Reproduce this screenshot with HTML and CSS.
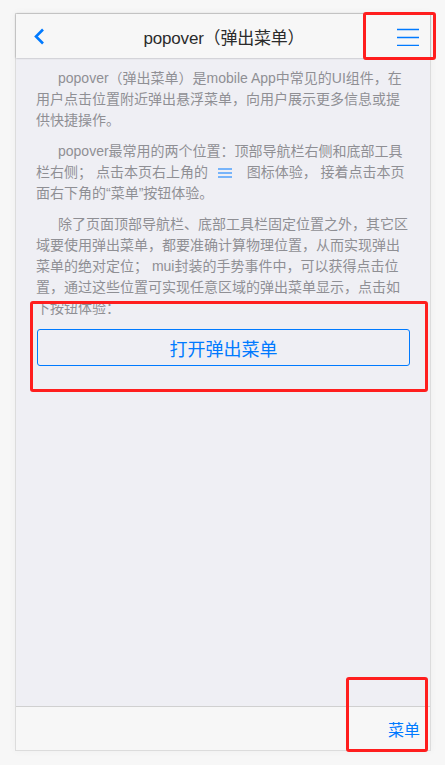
FILE: index.html
```html
<!DOCTYPE html>
<html lang="zh-CN">
<head>
<meta charset="utf-8">
<title>popover（弹出菜单）</title>
<link rel="stylesheet" href="styles.css">
</head>
<body>
<div class="stage">
  <div class="phone">
    <header class="bar bar-nav">
      <a class="back" aria-label="返回">
        <svg width="12" height="17" viewBox="0 0 12 17"><path d="M10 1.5 L3 8.5 L10 15.5" fill="none" stroke="#007aff" stroke-width="2.6"/></svg>
      </a>
      <h1 class="title">popover（弹出菜单）</h1>
      <a class="menu-icon" aria-label="菜单">
        <svg width="22" height="18" viewBox="0 0 22 18"><path d="M0 1.5H22M0 9.5H22M0 17.5H22" stroke="#007aff" stroke-width="1.4"/></svg>
      </a>
    </header>
    <main class="content">
      <p class="para">popover（弹出菜单）是mobile App中常见的UI组件，在用户点击位置附近弹出悬浮菜单，向用户展示更多信息或提供快捷操作。</p>
      <p class="para">popover最常用的两个位置：顶部导航栏右侧和底部工具栏右侧； 点击本页右上角的 <svg class="inline-icon" width="14" height="10" viewBox="0 0 14 10"><path d="M0 1H14M0 5H14M0 9H14" stroke="#007aff" stroke-width="1.2"/></svg> 图标体验， 接着点击本页面右下角的“菜单”按钮体验。</p>
      <p class="para">除了页面顶部导航栏、底部工具栏固定位置之外，其它区域要使用弹出菜单，都要准确计算物理位置，从而实现弹出菜单的绝对定位； mui封装的手势事件中，可以获得点击位置，通过这些位置可实现任意区域的弹出菜单显示，点击如下按钮体验：</p>
      <button class="btn-block">打开弹出菜单</button>
    </main>
    <footer class="bar bar-tab">
      <a class="tab-menu">菜单</a>
    </footer>
  </div>
  <div class="mark mark-top"></div>
  <div class="mark mark-mid"></div>
  <div class="mark mark-bottom"></div>
</div>
</body>
</html>
```
FILE: styles.css
```css
* { box-sizing: border-box; }
html, body {
  margin: 0;
  padding: 0;
  background: #f7f7f7;
}
body {
  font-family: "Liberation Sans", "Noto Sans CJK SC", sans-serif;
  width: 445px;
  height: 765px;
  overflow: hidden;
}
.stage {
  position: relative;
  padding: 13px 0 0 15px;
}
.phone {
  width: 416px;
  height: 738px;
  border: 1px solid #dcdcdc;
  background: #efeff4;
  display: flex;
  flex-direction: column;
  box-shadow: 0 0 8px rgba(0,0,0,0.04);
}
.bar {
  background: #f7f7f7;
  flex: none;
  height: 44px;
  display: flex;
  align-items: center;
}
.bar-nav {
  position: relative;
  box-shadow: 0 0 2px rgba(0,0,0,0.35);
  z-index: 1;
  padding: 0 11px 0 17px;
}
.back {
  display: flex;
  width: 30px;
}
.title {
  flex: 1;
  margin: 0;
  text-align: center;
  font-size: 17px;
  font-weight: normal;
  color: #2b2b2b;
  letter-spacing: -0.2px;
  padding-right: 4px;
}
.menu-icon {
  display: flex;
  width: 30px;
  justify-content: flex-end;
  padding-top: 1px;
}
.content {
  flex: 1;
  padding: 10px 20px 0 20px;
}
.para {
  margin: 0 0 10px;
  font-size: 14px;
  line-height: 21px;
  color: #8f8f94;
  text-indent: 22px;
}
.inline-icon {
  vertical-align: -1px;
  margin: 0 11px 0 6px;
}
.btn-block {
  display: flex;
  align-items: center;
  justify-content: center;
  width: 373px;
  height: 37px;
  margin: 0 0 0 1px;
  border: 1px solid #007aff;
  border-radius: 3px;
  background: transparent;
  color: #007aff;
  font-family: "Liberation Sans", "Noto Sans CJK SC", sans-serif;
  font-size: 18px;
  padding: 0;
}
.bar-tab {
  border-top: 1px solid #d0d0d0;
  justify-content: flex-end;
  padding: 0 10px 0 0;
}
.tab-menu {
  font-size: 16px;
  color: #007aff;
  padding-top: 1px;
}
.mark {
  position: absolute;
  z-index: 10;
  border: 3px solid #ff1e1e;
  border-radius: 3px;
}
.mark-top { left: 363px; top: 12px; width: 73px; height: 48px; }
.mark-mid { left: 30px; top: 301px; width: 398px; height: 91px; }
.mark-bottom { left: 346px; top: 677px; width: 82px; height: 75px; }
```
